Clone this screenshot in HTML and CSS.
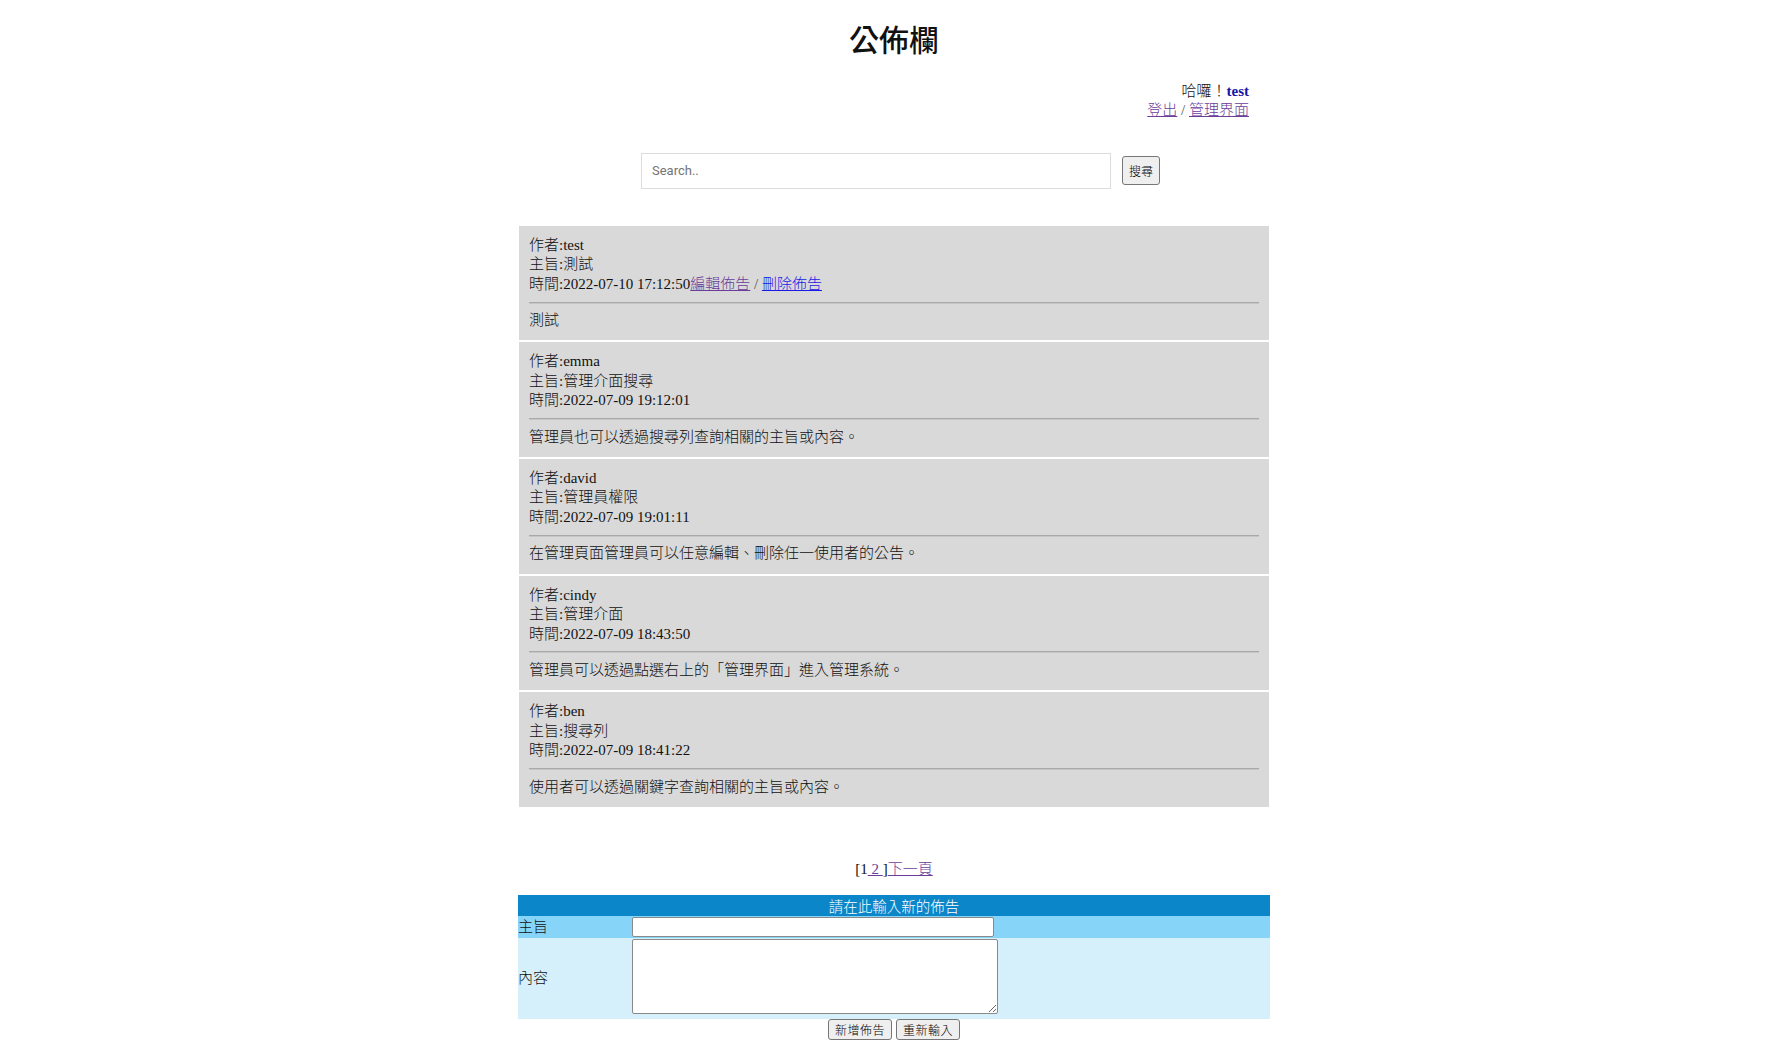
FILE: index.html
```html
<!DOCTYPE html>
<html lang="zh-Hant">
<head>
<meta charset="utf-8">
<title>公佈欄</title>
<link rel="stylesheet" href="styles.css">
</head>
<body>
<h1 class="title">公佈欄</h1>
<div class="user">
  <div>哈囉！<b class="uname">test</b></div>
  <div><a class="visited" href="#">登出</a><span class="sep"> / </span><a class="visited" href="#">管理界面</a></div>
</div>
<form class="search">
  <input class="search-input" type="text" placeholder="Search..">
  <button class="btn search-btn" type="button">搜尋</button>
</form>
<div class="posts">
  <div class="post">
    <div class="meta">作者:test<br>主旨:測試<br>時間:2022-07-10 17:12:50<a class="visited" href="#">編輯佈告</a><span class="sep"> / </span><a class="link" href="#">刪除佈告</a></div>
    <hr class="rule">
    <div class="content">測試</div>
  </div>
  <div class="post">
    <div class="meta">作者:emma<br>主旨:管理介面搜尋<br>時間:2022-07-09 19:12:01</div>
    <hr class="rule">
    <div class="content">管理員也可以透過搜尋列查詢相關的主旨或內容。</div>
  </div>
  <div class="post">
    <div class="meta">作者:david<br>主旨:管理員權限<br>時間:2022-07-09 19:01:11</div>
    <hr class="rule">
    <div class="content">在管理頁面管理員可以任意編輯、刪除任一使用者的公告。</div>
  </div>
  <div class="post">
    <div class="meta">作者:cindy<br>主旨:管理介面<br>時間:2022-07-09 18:43:50</div>
    <hr class="rule">
    <div class="content">管理員可以透過點選右上的「管理界面」進入管理系統。</div>
  </div>
  <div class="post">
    <div class="meta">作者:ben<br>主旨:搜尋列<br>時間:2022-07-09 18:41:22</div>
    <hr class="rule">
    <div class="content">使用者可以透過關鍵字查詢相關的主旨或內容。</div>
  </div>
</div>
<div class="pager">[1<a class="visited" href="#"> 2 </a>]<a class="visited" href="#">下一頁</a></div>
<form class="newpost-form">
<table class="newpost">
  <tr><th class="np-head" colspan="2">請在此輸入新的佈告</th></tr>
  <tr class="row-subject">
    <td class="np-label">主旨</td>
    <td class="np-field"><input class="subject-input" type="text"></td>
  </tr>
  <tr class="row-content">
    <td class="np-label">內容</td>
    <td class="np-field"><textarea class="content-input"></textarea></td>
  </tr>
  <tr>
    <td class="np-actions" colspan="2"><button class="btn form-btn" type="button">新增佈告</button><button class="btn form-btn" type="button">重新輸入</button></td>
  </tr>
</table>
</form>
</body>
</html>
```
FILE: styles.css
```css
html, body {
  margin: 0;
  padding: 0;
  background: #fff;
}
body {
  font-family: "Liberation Serif", "Noto Sans CJK TC", serif;
  font-size: 15px;
  font-weight: 300;
  line-height: 19.4px;
  color: #111;
}
.title {
  margin: 16px 0 0;
  text-align: center;
  font-family: "Noto Sans CJK TC", sans-serif;
  font-size: 30px;
  line-height: 44px;
  font-weight: 500;
}
.user {
  width: 750px;
  margin: 22px auto 0;
  padding-right: 20px;
  box-sizing: border-box;
  text-align: right;
}
.uname {
  color: #1616a8;
  font-weight: 700;
}
.visited {
  color: #6a3d9a;
}
.link {
  color: #1a1ae6;
}
.sep {
  color: #555;
}
.search {
  display: flex;
  justify-content: center;
  align-items: center;
  gap: 11px;
  margin: 32px 0 0;
  padding-left: 13px;
}
.search-input {
  width: 470px;
  height: 36px;
  box-sizing: border-box;
  border: 1px solid #dcdcdc;
  padding: 0 10px;
  font-family: Roboto, "Liberation Sans", sans-serif;
  font-size: 13px;
  outline: none;
}
.search-input::placeholder {
  color: #757575;
}
.btn {
  background: #efefef;
  border: 1px solid #767676;
  border-radius: 3px;
  color: #000;
  font-family: "Noto Sans CJK TC", sans-serif;
  font-size: 12px;
  font-weight: 300;
  line-height: 15px;
  box-sizing: border-box;
}
.search-btn {
  width: 38px;
  height: 29px;
  padding: 0;
}
.posts {
  width: 750px;
  margin: 37px auto 0;
  display: flex;
  flex-direction: column;
  gap: 2px;
}
.post {
  background: #d9d9d9;
  padding: 10px;
}
.rule {
  margin: 7.5px 0;
  border: 0;
  border-top: 1px solid #a9a9a9;
  border-bottom: 1px solid #c6c6c6;
  height: 0;
}
.pager {
  margin-top: 53px;
  text-align: center;
}
.newpost-form {
  margin: 16px 0 0;
}
.newpost {
  width: 752px;
  margin: 0 auto;
  border-collapse: collapse;
  font-family: "Liberation Serif", "Noto Sans CJK TC", serif;
  font-size: 15px;
}
.newpost td, .newpost th {
  padding: 0;
}
.np-head {
  background: #0a86c9;
  color: #fff;
  font-weight: 300;
  font-family: "Noto Sans CJK TC", sans-serif;
  font-size: 14.5px;
  height: 21px;
  line-height: 21px;
  text-align: center;
}
.row-subject td {
  background: #86d4f8;
}
.row-content td {
  background: #d6f0fb;
}
.np-label {
  width: 114px;
  padding-left: 1px;
  vertical-align: middle;
  text-align: left;
}
.np-field {
  vertical-align: top;
}
.row-subject .np-field {
  padding: 1px 0;
}
.row-content .np-field {
  padding: 1px 0 5px;
}
.subject-input {
  display: block;
  width: 362px;
  height: 20px;
  box-sizing: border-box;
  margin: 0;
  border: 1px solid #8a8a8a;
  border-radius: 2px;
  background: #fff;
}
.content-input {
  display: block;
  width: 366px;
  height: 75px;
  box-sizing: border-box;
  margin: 0;
  border: 1px solid #8a8a8a;
  border-radius: 2px;
  background: #fff;
}
.np-actions {
  text-align: center;
  padding-top: 3px;
}
.form-btn {
  height: 21px;
  padding: 0 6px;
  margin: 0 2px;
  font-size: 12px;
  letter-spacing: 0.5px;
}
```
